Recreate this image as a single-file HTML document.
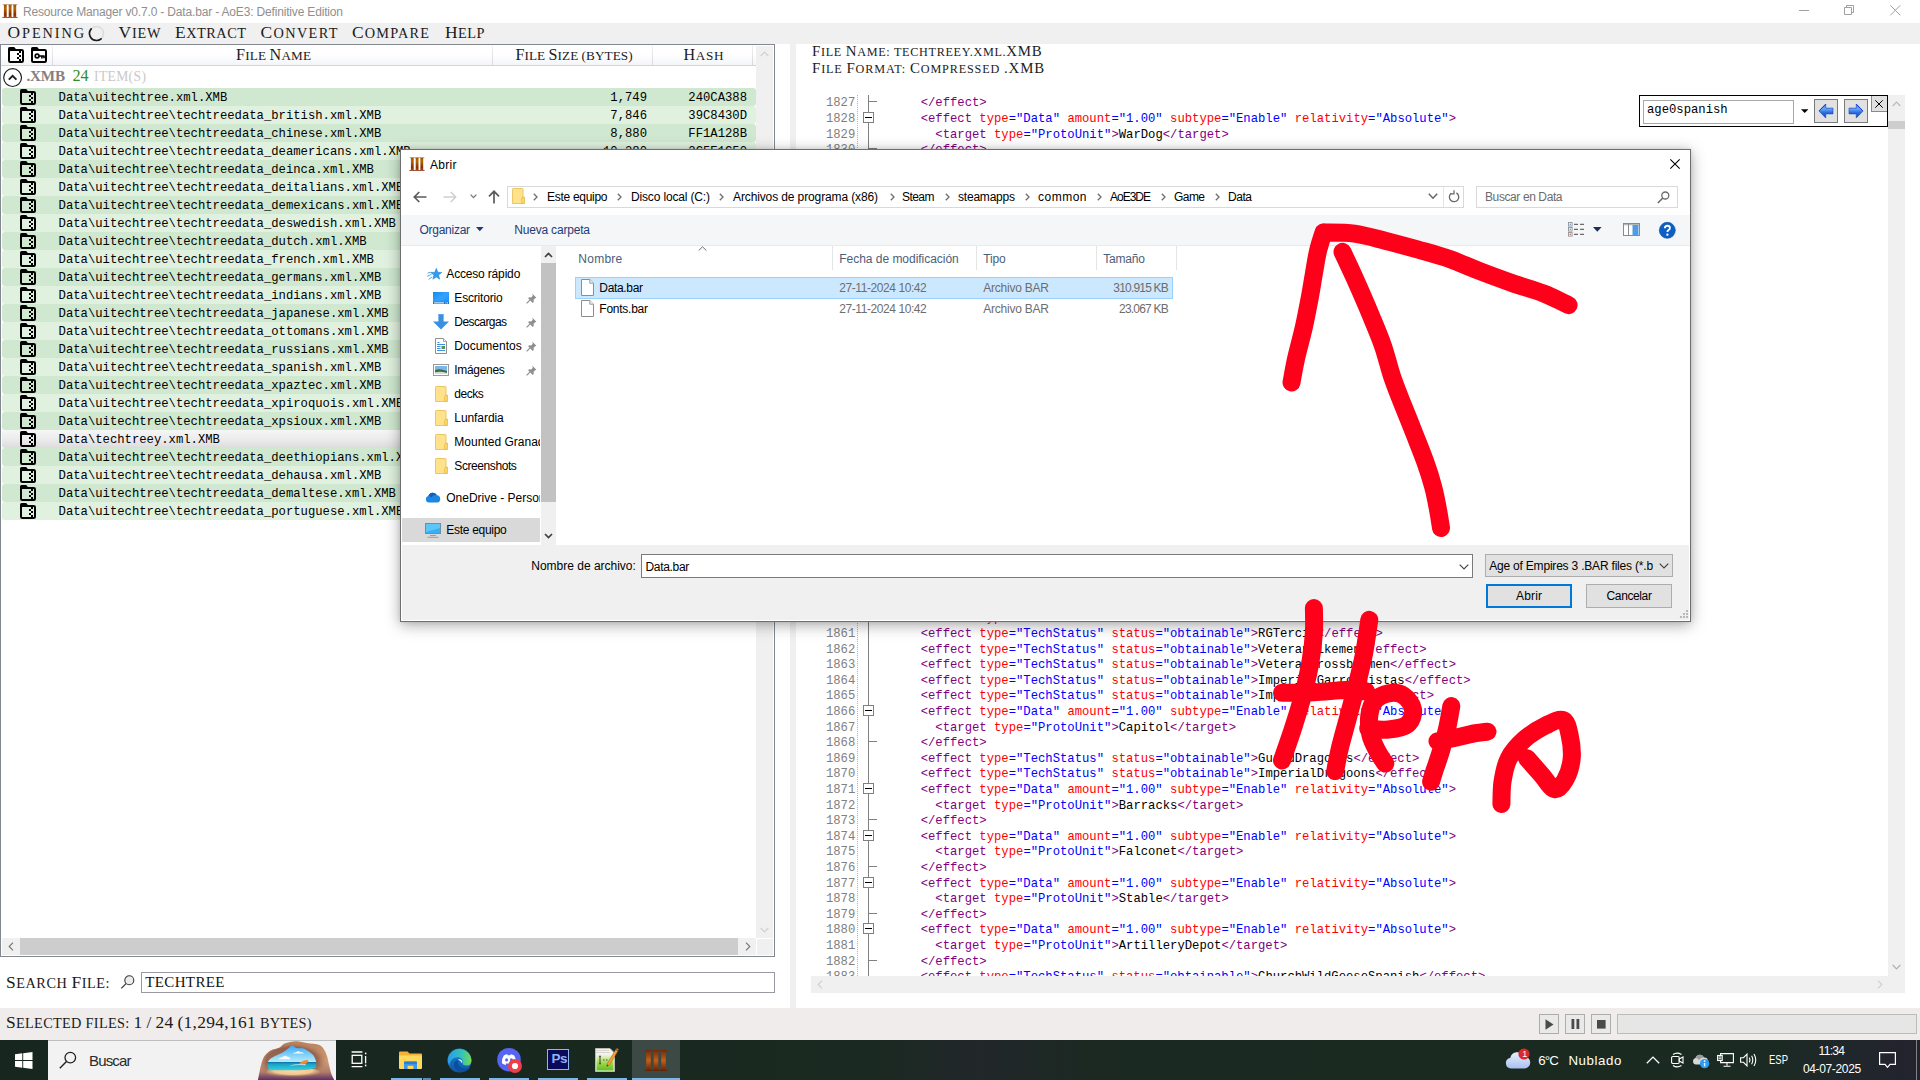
<!DOCTYPE html>
<html lang="es">
<head>
<meta charset="utf-8">
<title>Resource Manager v0.7.0 - Data.bar - AoE3: Definitive Edition</title>
<style>
html,body{margin:0;padding:0;width:1920px;height:1080px;overflow:hidden;background:#fff}
body{position:relative;font-family:"Liberation Sans",sans-serif;color:#000;font-size:12px}
.a{position:absolute}
svg{display:block;overflow:visible}
/* Trajan-like small caps: uppercase serif, big initial caps in <b> */
.tj{position:absolute;font-family:"Liberation Serif",serif;text-transform:uppercase;white-space:nowrap;transform-origin:0 50%;line-height:1}
.tj b{font-weight:normal;font-size:1.22em;line-height:0}
.tj .w{display:inline-block}
.tj .w::first-letter{font-size:1.22em;line-height:0}
.mono{font-family:"Liberation Mono",monospace;white-space:pre;font-size:12.22px}
.ui{position:absolute;font-family:"Liberation Sans",sans-serif;white-space:nowrap;line-height:1}
/* ---------- main window chrome ---------- */
#titlebar{left:0;top:0;width:1920px;height:23px;background:#fff}
#title{left:23px;top:6px;font-size:12px;color:#8f8f8f;letter-spacing:-.17px}
#menubar{left:0;top:23px;width:1920px;height:21px;background:#f0f0f0}
#menubar .tj{top:1px;font-size:14.3px;color:#1a1a1a;line-height:19px}
/* ---------- left panel ---------- */
#leftpanel{left:0;top:44px;width:775px;height:913px;box-sizing:border-box;border:1px solid #828790;background:#fff}
#lhead{left:0;top:0;width:755px;height:20px;background:linear-gradient(#fff 0%,#fff 45%,#f3f5f9 100%);border-bottom:1px solid #d5d5d5}
#lhead .sep{position:absolute;top:0;width:1px;height:20px;background:linear-gradient(#f2f2f2,#d8d8d8)}
#lhead .tj{font-size:13.2px;top:1.5px;line-height:17px;color:#1c1c1c}
.row{position:absolute;left:1px;width:754px;height:18px;border-radius:3px}
.row.d{background:#cfe8cf}
.row.l{background:#e0f1df}
.row.s{background:linear-gradient(#f6f6f6,#ececec 50%,#dcdcdc)}
.row svg{position:absolute;left:18px;top:1px}
.row span{position:absolute;top:1px;line-height:18px}
.row .n{left:56.6px}
.row .z{right:109px}
.row .h{right:9px}
#lvs{left:755px;top:1px;width:17px;height:892px;background:#f0f0f0}
#lhs{left:1px;top:893px;width:754px;height:17px;background:#f0f0f0}
#lhs .th{position:absolute;left:18px;top:0;width:718px;height:17px;background:#cdcdcd}
#lcorner{left:756px;top:894px;width:16px;height:16px;background:#f0f0f0}
#splitter{left:790px;top:44px;width:7px;height:964px;background:#f0f0f0}
#searchlbl{left:7px;top:972px;font-size:14.3px;line-height:21px;color:#1a1a1a}
#searchbox{left:141px;top:972px;width:634px;height:21px;box-sizing:border-box;border:1px solid #9a9aa4;background:#fff}

/* ---------- right panel ---------- */
#rightpanel{left:796px;top:44px;width:1124px;height:964px;background:#fff}
#rightpanel>.tj{font-size:12.2px;line-height:17px;color:#1c1c1c}
#editor{left:15px;top:51px;width:1077px;height:881px;overflow:hidden;background:#fff}
.ln{position:absolute;left:0;height:16px;line-height:16px;font-family:"Liberation Mono",monospace;font-size:12.22px;white-space:pre}
.ln .no{position:absolute;left:0;width:44.3px;text-align:right;color:#808080}
.ln .cd{position:absolute;left:65.7px}
.ln i{font-style:normal}
.ln .t{color:#800080}.ln .r{color:#ff0000}.ln .b{color:#0000ff}
.fb{position:absolute;left:52px;width:11px;height:11px;box-sizing:border-box;border:1px solid #808080;background:#fff}
.fb:after{content:"";position:absolute;left:1px;top:4px;width:7px;height:1px;background:#000}
.ft{position:absolute;left:58px;width:8px;height:1px;background:#808080}
#find{left:843px;top:51px;width:249px;height:32px;box-sizing:border-box;border:1px solid #000;background:#fff}
.fbtn{position:absolute;top:3px;width:24px;height:24px;box-sizing:border-box;border:1px solid #7a7a7a;background:#e1e1e1}
/* ---------- dialog ---------- */
#dialog{left:400px;top:149px;width:1291px;height:473px;box-sizing:border-box;border:1px solid #6e6e6e;background:#fff;box-shadow:0 3px 14px rgba(0,0,0,.34),0 0 4px rgba(0,0,0,.10)}
#dialog .pg{left:-401px;top:-150px;width:0;height:0}
#dialog .ui{font-size:12px;line-height:12px;color:#000}
#dialog .vs{position:absolute;top:246px;width:1px;height:24px;background:#e5e5e5}
/* ---------- status + taskbar ---------- */
#statusbar{left:0;top:1008px;width:1920px;height:32px;background:#f0eceb}
#statusbar .tj{left:6px;top:5px;font-size:14.3px;line-height:21px;color:#1a1a1a}
.mbtn{position:absolute;top:6px;width:20px;height:20px;box-sizing:border-box;border:1px solid #adadad;background:#e9e9e9}
#taskbar{left:0;top:1040px;width:1920px;height:40px;background:linear-gradient(90deg,#17261e 0%,#192920 40%,#1b2922 46%,#22272a 51%,#1b2922 57%,#1a2a20 75%,#1b2a22 92%,#20262c 97%,#23232e 100%)}
#taskbar .ul{position:absolute;top:38px;height:2px;background:#76b9ed}
#taskbar .ui{color:#fff}
</style>
</head>
<body>
<!-- ===== main window title bar ===== -->
<div id="titlebar" class="a">
  <div class="a" style="left:2px;top:4px"><svg width="16" height="14" viewBox="0 0 16 14"><defs><linearGradient id="ap2" x1="0" y1="0" x2="0" y2="1"><stop offset="0" stop-color="#9c5206"/><stop offset=".28" stop-color="#b96400"/><stop offset=".8" stop-color="#862c00"/><stop offset="1" stop-color="#b04a1c"/></linearGradient></defs><rect x=".6" y=".1" width="14.800" height=".7" fill="#9c6a55" opacity=".7"/><rect x=".4" y="13" width="15.200" height="1" fill="#96452c" opacity=".9"/><g fill="url(#ap2)"><path d="M1.600.800h3.400L4.700 2v10.200l.4 1H1.500l.4-1V2z"/><path d="M6.400.800h3.400L9.500 2v10.200l.4 1H6.300l.4-1V2z"/><path d="M11.100.800h3.400L14.200 2v10.200l.4 1h-3.600l.4-1V2z"/></g></svg></div>
  <div id="title" class="ui">Resource Manager v0.7.0 - Data.bar - AoE3: Definitive Edition</div>
  <!-- caption buttons (inactive, gray) -->
  <svg class="a" style="left:1799px;top:5px" width="11" height="11" viewBox="0 0 11 11"><path d="M0 5.5h10" stroke="#a0a0a0" stroke-width="1" fill="none"/></svg>
  <svg class="a" style="left:1844px;top:5px" width="11" height="11" viewBox="0 0 11 11"><path d="M.5 2.5h7v7h-7zM2.5 2.5v-2h7v7h-2" stroke="#a0a0a0" stroke-width="1" fill="none"/></svg>
  <svg class="a" style="left:1890px;top:5px" width="11" height="11" viewBox="0 0 11 11"><path d="M.3.3l10 10M10.3.3l-10 10" stroke="#a0a0a0" stroke-width="1" fill="none"/></svg>
</div>
<!-- ===== menu bar ===== -->
<div id="menubar" class="a">
  <span class="tj" style="left:7.5px;letter-spacing:1.91px;"><span class="w">Opening</span></span>
  <svg class="a" style="left:88px;top:2px" width="17" height="17" viewBox="0 0 17 17"><circle cx="8.5" cy="8.5" r="7" fill="none" stroke="#dcdcdc" stroke-width="1.6"/><path d="M3.2 3.9A7 7 0 0 0 8.5 15.5a7 7 0 0 0 4.6-1.7" fill="none" stroke="#1c1c1c" stroke-width="1.7" stroke-linecap="round"/></svg>
  <span class="tj" style="left:118.5px;letter-spacing:0.80px;"><span class="w">View</span></span>
  <span class="tj" style="left:175px;letter-spacing:0.52px;"><span class="w">Extract</span></span>
  <span class="tj" style="left:260.5px;letter-spacing:1.37px;"><span class="w">Convert</span></span>
  <span class="tj" style="left:352px;letter-spacing:1.18px;"><span class="w">Compare</span></span>
  <span class="tj" style="left:445px;letter-spacing:0.49px;"><span class="w">Help</span></span>
</div>
<!-- ===== left panel: file list ===== -->
<div id="leftpanel" class="a">
  <div id="lhead" class="a">
    <div class="a" style="left:7px;top:2px"><svg width="16" height="16" viewBox="0 0 16 16"><path d="M0 4V1.6Q0 0 1.6 0H6.2L8.3 2.4V4z" fill="#000"/><rect x="1" y="3" width="14" height="12" rx="1.3" fill="none" stroke="#000" stroke-width="2"/><path d="M11 4h2v2h-2zM9 6h2v2H9zM11 8h2v2h-2zM9 10h2v2H9zM11 12h2v2h-2z" fill="#000"/></svg></div>
    <div class="a" style="left:30px;top:2px"><svg width="16" height="16" viewBox="0 0 16 16"><path d="M0 4V1.6Q0 0 1.6 0H6.2L8.3 2.4V4z" fill="#000"/><rect x="1" y="3" width="14" height="12" rx="1.3" fill="none" stroke="#000" stroke-width="2"/><circle cx="6.1" cy="9" r="1.9" fill="none" stroke="#000" stroke-width="1.6"/><path d="M8 9H13.6M10.9 9v2.6M13 9v2.2" fill="none" stroke="#000" stroke-width="1.6"/></svg></div>
    <div class="sep" style="left:51px"></div><div class="sep" style="left:491px"></div><div class="sep" style="left:651px"></div><div class="sep" style="left:751px"></div>
    <span class="tj" style="left:235px;letter-spacing:0.16px;"><span class="w">File</span> <span class="w">Name</span></span>
    <span class="tj" style="left:514.5px;letter-spacing:0.06px;"><span class="w">File</span> <span class="w">Size</span> (bytes)</span>
    <span class="tj" style="left:682.5px;letter-spacing:0.66px;"><span class="w">Hash</span></span>
  </div>
  <!-- group header -->
  <svg class="a" style="left:2px;top:23px" width="20" height="20" viewBox="0 0 20 20"><circle cx="9.6" cy="9.6" r="8.9" fill="#fff" stroke="#1e1e1e" stroke-width="1.2"/><path d="M5.8 11.6L9.6 7.9l3.8 3.7" fill="none" stroke="#1e1e1e" stroke-width="1.9"/></svg>
  <span class="tj" style="left:25.5px;top:21px;font-size:15.2px;line-height:20px;font-weight:bold;color:#86807f;letter-spacing:-.2px">.XMB</span>
  <span class="tj" style="left:71.5px;top:21px;font-size:16.2px;line-height:20px;color:#2e8b2e">24</span>
  <span class="tj" style="left:93px;top:21.5px;font-size:13.6px;line-height:20px;color:#cdc7c7;letter-spacing:.35px">item(s)</span>
  <div class="row d" style="top:43px"><svg width="16" height="16" viewBox="0 0 16 16"><path d="M0 4V1.6Q0 0 1.6 0H6.2L8.3 2.4V4z" fill="#000"/><rect x="1" y="3" width="14" height="12" rx="1.3" fill="none" stroke="#000" stroke-width="2"/><path d="M11 4h2v2h-2zM9 6h2v2H9zM11 8h2v2h-2zM9 10h2v2H9zM11 12h2v2h-2z" fill="#000"/></svg><span class="n mono">Data\uitechtree.xml.XMB</span><span class="z mono">1,749</span><span class="h mono">240CA388</span></div>
<div class="row l" style="top:61px"><svg width="16" height="16" viewBox="0 0 16 16"><path d="M0 4V1.6Q0 0 1.6 0H6.2L8.3 2.4V4z" fill="#000"/><rect x="1" y="3" width="14" height="12" rx="1.3" fill="none" stroke="#000" stroke-width="2"/><path d="M11 4h2v2h-2zM9 6h2v2H9zM11 8h2v2h-2zM9 10h2v2H9zM11 12h2v2h-2z" fill="#000"/></svg><span class="n mono">Data\uitechtree\techtreedata_british.xml.XMB</span><span class="z mono">7,846</span><span class="h mono">39C8430D</span></div>
<div class="row d" style="top:79px"><svg width="16" height="16" viewBox="0 0 16 16"><path d="M0 4V1.6Q0 0 1.6 0H6.2L8.3 2.4V4z" fill="#000"/><rect x="1" y="3" width="14" height="12" rx="1.3" fill="none" stroke="#000" stroke-width="2"/><path d="M11 4h2v2h-2zM9 6h2v2H9zM11 8h2v2h-2zM9 10h2v2H9zM11 12h2v2h-2z" fill="#000"/></svg><span class="n mono">Data\uitechtree\techtreedata_chinese.xml.XMB</span><span class="z mono">8,880</span><span class="h mono">FF1A128B</span></div>
<div class="row l" style="top:97px"><svg width="16" height="16" viewBox="0 0 16 16"><path d="M0 4V1.6Q0 0 1.6 0H6.2L8.3 2.4V4z" fill="#000"/><rect x="1" y="3" width="14" height="12" rx="1.3" fill="none" stroke="#000" stroke-width="2"/><path d="M11 4h2v2h-2zM9 6h2v2H9zM11 8h2v2h-2zM9 10h2v2H9zM11 12h2v2h-2z" fill="#000"/></svg><span class="n mono">Data\uitechtree\techtreedata_deamericans.xml.XMB</span><span class="z mono">10,280</span><span class="h mono">2C5E1C50</span></div>
<div class="row d" style="top:115px"><svg width="16" height="16" viewBox="0 0 16 16"><path d="M0 4V1.6Q0 0 1.6 0H6.2L8.3 2.4V4z" fill="#000"/><rect x="1" y="3" width="14" height="12" rx="1.3" fill="none" stroke="#000" stroke-width="2"/><path d="M11 4h2v2h-2zM9 6h2v2H9zM11 8h2v2h-2zM9 10h2v2H9zM11 12h2v2h-2z" fill="#000"/></svg><span class="n mono">Data\uitechtree\techtreedata_deinca.xml.XMB</span></div>
<div class="row l" style="top:133px"><svg width="16" height="16" viewBox="0 0 16 16"><path d="M0 4V1.6Q0 0 1.6 0H6.2L8.3 2.4V4z" fill="#000"/><rect x="1" y="3" width="14" height="12" rx="1.3" fill="none" stroke="#000" stroke-width="2"/><path d="M11 4h2v2h-2zM9 6h2v2H9zM11 8h2v2h-2zM9 10h2v2H9zM11 12h2v2h-2z" fill="#000"/></svg><span class="n mono">Data\uitechtree\techtreedata_deitalians.xml.XMB</span></div>
<div class="row d" style="top:151px"><svg width="16" height="16" viewBox="0 0 16 16"><path d="M0 4V1.6Q0 0 1.6 0H6.2L8.3 2.4V4z" fill="#000"/><rect x="1" y="3" width="14" height="12" rx="1.3" fill="none" stroke="#000" stroke-width="2"/><path d="M11 4h2v2h-2zM9 6h2v2H9zM11 8h2v2h-2zM9 10h2v2H9zM11 12h2v2h-2z" fill="#000"/></svg><span class="n mono">Data\uitechtree\techtreedata_demexicans.xml.XMB</span></div>
<div class="row l" style="top:169px"><svg width="16" height="16" viewBox="0 0 16 16"><path d="M0 4V1.6Q0 0 1.6 0H6.2L8.3 2.4V4z" fill="#000"/><rect x="1" y="3" width="14" height="12" rx="1.3" fill="none" stroke="#000" stroke-width="2"/><path d="M11 4h2v2h-2zM9 6h2v2H9zM11 8h2v2h-2zM9 10h2v2H9zM11 12h2v2h-2z" fill="#000"/></svg><span class="n mono">Data\uitechtree\techtreedata_deswedish.xml.XMB</span></div>
<div class="row d" style="top:187px"><svg width="16" height="16" viewBox="0 0 16 16"><path d="M0 4V1.6Q0 0 1.6 0H6.2L8.3 2.4V4z" fill="#000"/><rect x="1" y="3" width="14" height="12" rx="1.3" fill="none" stroke="#000" stroke-width="2"/><path d="M11 4h2v2h-2zM9 6h2v2H9zM11 8h2v2h-2zM9 10h2v2H9zM11 12h2v2h-2z" fill="#000"/></svg><span class="n mono">Data\uitechtree\techtreedata_dutch.xml.XMB</span></div>
<div class="row l" style="top:205px"><svg width="16" height="16" viewBox="0 0 16 16"><path d="M0 4V1.6Q0 0 1.6 0H6.2L8.3 2.4V4z" fill="#000"/><rect x="1" y="3" width="14" height="12" rx="1.3" fill="none" stroke="#000" stroke-width="2"/><path d="M11 4h2v2h-2zM9 6h2v2H9zM11 8h2v2h-2zM9 10h2v2H9zM11 12h2v2h-2z" fill="#000"/></svg><span class="n mono">Data\uitechtree\techtreedata_french.xml.XMB</span></div>
<div class="row d" style="top:223px"><svg width="16" height="16" viewBox="0 0 16 16"><path d="M0 4V1.6Q0 0 1.6 0H6.2L8.3 2.4V4z" fill="#000"/><rect x="1" y="3" width="14" height="12" rx="1.3" fill="none" stroke="#000" stroke-width="2"/><path d="M11 4h2v2h-2zM9 6h2v2H9zM11 8h2v2h-2zM9 10h2v2H9zM11 12h2v2h-2z" fill="#000"/></svg><span class="n mono">Data\uitechtree\techtreedata_germans.xml.XMB</span></div>
<div class="row l" style="top:241px"><svg width="16" height="16" viewBox="0 0 16 16"><path d="M0 4V1.6Q0 0 1.6 0H6.2L8.3 2.4V4z" fill="#000"/><rect x="1" y="3" width="14" height="12" rx="1.3" fill="none" stroke="#000" stroke-width="2"/><path d="M11 4h2v2h-2zM9 6h2v2H9zM11 8h2v2h-2zM9 10h2v2H9zM11 12h2v2h-2z" fill="#000"/></svg><span class="n mono">Data\uitechtree\techtreedata_indians.xml.XMB</span></div>
<div class="row d" style="top:259px"><svg width="16" height="16" viewBox="0 0 16 16"><path d="M0 4V1.6Q0 0 1.6 0H6.2L8.3 2.4V4z" fill="#000"/><rect x="1" y="3" width="14" height="12" rx="1.3" fill="none" stroke="#000" stroke-width="2"/><path d="M11 4h2v2h-2zM9 6h2v2H9zM11 8h2v2h-2zM9 10h2v2H9zM11 12h2v2h-2z" fill="#000"/></svg><span class="n mono">Data\uitechtree\techtreedata_japanese.xml.XMB</span></div>
<div class="row l" style="top:277px"><svg width="16" height="16" viewBox="0 0 16 16"><path d="M0 4V1.6Q0 0 1.6 0H6.2L8.3 2.4V4z" fill="#000"/><rect x="1" y="3" width="14" height="12" rx="1.3" fill="none" stroke="#000" stroke-width="2"/><path d="M11 4h2v2h-2zM9 6h2v2H9zM11 8h2v2h-2zM9 10h2v2H9zM11 12h2v2h-2z" fill="#000"/></svg><span class="n mono">Data\uitechtree\techtreedata_ottomans.xml.XMB</span></div>
<div class="row d" style="top:295px"><svg width="16" height="16" viewBox="0 0 16 16"><path d="M0 4V1.6Q0 0 1.6 0H6.2L8.3 2.4V4z" fill="#000"/><rect x="1" y="3" width="14" height="12" rx="1.3" fill="none" stroke="#000" stroke-width="2"/><path d="M11 4h2v2h-2zM9 6h2v2H9zM11 8h2v2h-2zM9 10h2v2H9zM11 12h2v2h-2z" fill="#000"/></svg><span class="n mono">Data\uitechtree\techtreedata_russians.xml.XMB</span></div>
<div class="row l" style="top:313px"><svg width="16" height="16" viewBox="0 0 16 16"><path d="M0 4V1.6Q0 0 1.6 0H6.2L8.3 2.4V4z" fill="#000"/><rect x="1" y="3" width="14" height="12" rx="1.3" fill="none" stroke="#000" stroke-width="2"/><path d="M11 4h2v2h-2zM9 6h2v2H9zM11 8h2v2h-2zM9 10h2v2H9zM11 12h2v2h-2z" fill="#000"/></svg><span class="n mono">Data\uitechtree\techtreedata_spanish.xml.XMB</span></div>
<div class="row d" style="top:331px"><svg width="16" height="16" viewBox="0 0 16 16"><path d="M0 4V1.6Q0 0 1.6 0H6.2L8.3 2.4V4z" fill="#000"/><rect x="1" y="3" width="14" height="12" rx="1.3" fill="none" stroke="#000" stroke-width="2"/><path d="M11 4h2v2h-2zM9 6h2v2H9zM11 8h2v2h-2zM9 10h2v2H9zM11 12h2v2h-2z" fill="#000"/></svg><span class="n mono">Data\uitechtree\techtreedata_xpaztec.xml.XMB</span></div>
<div class="row l" style="top:349px"><svg width="16" height="16" viewBox="0 0 16 16"><path d="M0 4V1.6Q0 0 1.6 0H6.2L8.3 2.4V4z" fill="#000"/><rect x="1" y="3" width="14" height="12" rx="1.3" fill="none" stroke="#000" stroke-width="2"/><path d="M11 4h2v2h-2zM9 6h2v2H9zM11 8h2v2h-2zM9 10h2v2H9zM11 12h2v2h-2z" fill="#000"/></svg><span class="n mono">Data\uitechtree\techtreedata_xpiroquois.xml.XMB</span></div>
<div class="row d" style="top:367px"><svg width="16" height="16" viewBox="0 0 16 16"><path d="M0 4V1.6Q0 0 1.6 0H6.2L8.3 2.4V4z" fill="#000"/><rect x="1" y="3" width="14" height="12" rx="1.3" fill="none" stroke="#000" stroke-width="2"/><path d="M11 4h2v2h-2zM9 6h2v2H9zM11 8h2v2h-2zM9 10h2v2H9zM11 12h2v2h-2z" fill="#000"/></svg><span class="n mono">Data\uitechtree\techtreedata_xpsioux.xml.XMB</span></div>
<div class="row s" style="top:385px"><svg width="16" height="16" viewBox="0 0 16 16"><path d="M0 4V1.6Q0 0 1.6 0H6.2L8.3 2.4V4z" fill="#000"/><rect x="1" y="3" width="14" height="12" rx="1.3" fill="none" stroke="#000" stroke-width="2"/><path d="M11 4h2v2h-2zM9 6h2v2H9zM11 8h2v2h-2zM9 10h2v2H9zM11 12h2v2h-2z" fill="#000"/></svg><span class="n mono">Data\techtreey.xml.XMB</span></div>
<div class="row d" style="top:403px"><svg width="16" height="16" viewBox="0 0 16 16"><path d="M0 4V1.6Q0 0 1.6 0H6.2L8.3 2.4V4z" fill="#000"/><rect x="1" y="3" width="14" height="12" rx="1.3" fill="none" stroke="#000" stroke-width="2"/><path d="M11 4h2v2h-2zM9 6h2v2H9zM11 8h2v2h-2zM9 10h2v2H9zM11 12h2v2h-2z" fill="#000"/></svg><span class="n mono">Data\uitechtree\techtreedata_deethiopians.xml.XMB</span></div>
<div class="row l" style="top:421px"><svg width="16" height="16" viewBox="0 0 16 16"><path d="M0 4V1.6Q0 0 1.6 0H6.2L8.3 2.4V4z" fill="#000"/><rect x="1" y="3" width="14" height="12" rx="1.3" fill="none" stroke="#000" stroke-width="2"/><path d="M11 4h2v2h-2zM9 6h2v2H9zM11 8h2v2h-2zM9 10h2v2H9zM11 12h2v2h-2z" fill="#000"/></svg><span class="n mono">Data\uitechtree\techtreedata_dehausa.xml.XMB</span></div>
<div class="row d" style="top:439px"><svg width="16" height="16" viewBox="0 0 16 16"><path d="M0 4V1.6Q0 0 1.6 0H6.2L8.3 2.4V4z" fill="#000"/><rect x="1" y="3" width="14" height="12" rx="1.3" fill="none" stroke="#000" stroke-width="2"/><path d="M11 4h2v2h-2zM9 6h2v2H9zM11 8h2v2h-2zM9 10h2v2H9zM11 12h2v2h-2z" fill="#000"/></svg><span class="n mono">Data\uitechtree\techtreedata_demaltese.xml.XMB</span></div>
<div class="row l" style="top:457px"><svg width="16" height="16" viewBox="0 0 16 16"><path d="M0 4V1.6Q0 0 1.6 0H6.2L8.3 2.4V4z" fill="#000"/><rect x="1" y="3" width="14" height="12" rx="1.3" fill="none" stroke="#000" stroke-width="2"/><path d="M11 4h2v2h-2zM9 6h2v2H9zM11 8h2v2h-2zM9 10h2v2H9zM11 12h2v2h-2z" fill="#000"/></svg><span class="n mono">Data\uitechtree\techtreedata_portuguese.xml.XMB</span></div>
  <!-- scrollbars -->
  <div id="lvs" class="a"><svg class="a" style="left:4px;top:5px" width="9" height="6" viewBox="0 0 9 6"><path d="M.7 5L4.5 1.2 8.3 5" fill="none" stroke="#d0d0d0" stroke-width="1.2"/></svg>
    <svg class="a" style="left:4px;top:881px" width="9" height="6" viewBox="0 0 9 6"><path d="M.7 1L4.5 4.8 8.3 1" fill="none" stroke="#d0d0d0" stroke-width="1.2"/></svg></div>
  <div id="lhs" class="a"><div class="th"></div>
    <svg class="a" style="left:6px;top:4px" width="6" height="9" viewBox="0 0 6 9"><path d="M5 .7L1.2 4.5 5 8.3" fill="none" stroke="#7a7a7a" stroke-width="1.2"/></svg>
    <svg class="a" style="left:743px;top:4px" width="6" height="9" viewBox="0 0 6 9"><path d="M1 .7L4.8 4.5 1 8.3" fill="none" stroke="#7a7a7a" stroke-width="1.2"/></svg></div>
  <div id="lcorner" class="a"></div>
</div>
<div id="splitter" class="a"></div>
<span class="tj" style="left:6px;letter-spacing:0.53px;top:973px;font-size:14.3px;line-height:21px;color:#1a1a1a"><span class="w">Search</span> <span class="w">File:</span></span>
<svg class="a" style="left:119px;top:974px" width="17" height="17" viewBox="0 0 17 17"><path d="M7.300 9.400L2.300 14.400" stroke="#3a3a3a" stroke-width="1.300" fill="none"/><circle cx="10.300" cy="6.300" r="4.500" fill="#ececec" stroke="#3a3a3a" stroke-width="1.100"/></svg>
<div id="searchbox" class="a"><span class="tj" style="left:3.200px;letter-spacing:0.38px;top:0;font-size:15px;line-height:19px;color:#111">techtree</span></div>
<!-- ===== right panel: preview ===== -->
<div id="rightpanel" class="a">
  <span class="tj" style="left:16px;letter-spacing:0.69px;top:0px"><span class="w">File</span> <span class="w">Name:</span> techtreey.xml.<b>XMB</b></span>
  <span class="tj" style="left:16px;letter-spacing:0.84px;top:17px"><span class="w">File</span> <span class="w">Format:</span> <span class="w">Compressed</span> <b>.XMB</b></span>
  <div id="editor" class="a">
    <div class="a" style="left:46px;top:0;width:1px;height:881px;background:repeating-linear-gradient(#b4b4b4 0 1px,#fff 1px 2px)"></div>
    <div class="a" style="left:57px;top:0;width:1px;height:881px;background:#808080"></div>
    <div class="ln" style="top:0px"><span class="no">1827</span><span class="cd">      <i class="t">&lt;/effect&gt;</i></span></div>
<div class="ft" style="top:6px"></div>
<div class="ln" style="top:16px"><span class="no">1828</span><span class="cd">      <i class="t">&lt;effect</i> <i class="r">type</i><i class="b">="Data"</i> <i class="r">amount</i><i class="b">="1.00"</i> <i class="r">subtype</i><i class="b">="Enable"</i> <i class="r">relativity</i><i class="b">="Absolute"</i><i class="t">&gt;</i></span></div>
<div class="fb" style="top:17px"></div>
<div class="ln" style="top:32px"><span class="no">1829</span><span class="cd">        <i class="t">&lt;target</i> <i class="r">type</i><i class="b">="ProtoUnit"</i><i class="t">&gt;</i>WarDog<i class="t">&lt;/target&gt;</i></span></div>
<div class="ln" style="top:47px"><span class="no">1830</span><span class="cd">      <i class="t">&lt;/effect&gt;</i></span></div>
<div class="ft" style="top:53px"></div>
<div class="ln" style="top:515px"><span class="no">1860</span><span class="cd">      <i class="t">&lt;effect</i> <i class="r">type</i><i class="b">="TechStatus"</i> <i class="r">status</i><i class="b">="obtainable"</i><i class="t">&gt;</i>GuardLancers<i class="t">&lt;/effect&gt;</i></span></div>
<div class="ln" style="top:531px"><span class="no">1861</span><span class="cd">      <i class="t">&lt;effect</i> <i class="r">type</i><i class="b">="TechStatus"</i> <i class="r">status</i><i class="b">="obtainable"</i><i class="t">&gt;</i>RGTercio<i class="t">&lt;/effect&gt;</i></span></div>
<div class="ln" style="top:547px"><span class="no">1862</span><span class="cd">      <i class="t">&lt;effect</i> <i class="r">type</i><i class="b">="TechStatus"</i> <i class="r">status</i><i class="b">="obtainable"</i><i class="t">&gt;</i>VeteranPikemen<i class="t">&lt;/effect&gt;</i></span></div>
<div class="ln" style="top:562px"><span class="no">1863</span><span class="cd">      <i class="t">&lt;effect</i> <i class="r">type</i><i class="b">="TechStatus"</i> <i class="r">status</i><i class="b">="obtainable"</i><i class="t">&gt;</i>VeteranCrossbowmen<i class="t">&lt;/effect&gt;</i></span></div>
<div class="ln" style="top:578px"><span class="no">1864</span><span class="cd">      <i class="t">&lt;effect</i> <i class="r">type</i><i class="b">="TechStatus"</i> <i class="r">status</i><i class="b">="obtainable"</i><i class="t">&gt;</i>ImperialGarrochistas<i class="t">&lt;/effect&gt;</i></span></div>
<div class="ln" style="top:593px"><span class="no">1865</span><span class="cd">      <i class="t">&lt;effect</i> <i class="r">type</i><i class="b">="TechStatus"</i> <i class="r">status</i><i class="b">="obtainable"</i><i class="t">&gt;</i>ImperialLancers<i class="t">&lt;/effect&gt;</i></span></div>
<div class="ln" style="top:609px"><span class="no">1866</span><span class="cd">      <i class="t">&lt;effect</i> <i class="r">type</i><i class="b">="Data"</i> <i class="r">amount</i><i class="b">="1.00"</i> <i class="r">subtype</i><i class="b">="Enable"</i> <i class="r">relativity</i><i class="b">="Absolute"</i><i class="t">&gt;</i></span></div>
<div class="fb" style="top:610px"></div>
<div class="ln" style="top:625px"><span class="no">1867</span><span class="cd">        <i class="t">&lt;target</i> <i class="r">type</i><i class="b">="ProtoUnit"</i><i class="t">&gt;</i>Capitol<i class="t">&lt;/target&gt;</i></span></div>
<div class="ln" style="top:640px"><span class="no">1868</span><span class="cd">      <i class="t">&lt;/effect&gt;</i></span></div>
<div class="ft" style="top:646px"></div>
<div class="ln" style="top:656px"><span class="no">1869</span><span class="cd">      <i class="t">&lt;effect</i> <i class="r">type</i><i class="b">="TechStatus"</i> <i class="r">status</i><i class="b">="obtainable"</i><i class="t">&gt;</i>GuardDragoons<i class="t">&lt;/effect&gt;</i></span></div>
<div class="ln" style="top:671px"><span class="no">1870</span><span class="cd">      <i class="t">&lt;effect</i> <i class="r">type</i><i class="b">="TechStatus"</i> <i class="r">status</i><i class="b">="obtainable"</i><i class="t">&gt;</i>ImperialDragoons<i class="t">&lt;/effect&gt;</i></span></div>
<div class="ln" style="top:687px"><span class="no">1871</span><span class="cd">      <i class="t">&lt;effect</i> <i class="r">type</i><i class="b">="Data"</i> <i class="r">amount</i><i class="b">="1.00"</i> <i class="r">subtype</i><i class="b">="Enable"</i> <i class="r">relativity</i><i class="b">="Absolute"</i><i class="t">&gt;</i></span></div>
<div class="fb" style="top:688px"></div>
<div class="ln" style="top:703px"><span class="no">1872</span><span class="cd">        <i class="t">&lt;target</i> <i class="r">type</i><i class="b">="ProtoUnit"</i><i class="t">&gt;</i>Barracks<i class="t">&lt;/target&gt;</i></span></div>
<div class="ln" style="top:718px"><span class="no">1873</span><span class="cd">      <i class="t">&lt;/effect&gt;</i></span></div>
<div class="ft" style="top:724px"></div>
<div class="ln" style="top:734px"><span class="no">1874</span><span class="cd">      <i class="t">&lt;effect</i> <i class="r">type</i><i class="b">="Data"</i> <i class="r">amount</i><i class="b">="1.00"</i> <i class="r">subtype</i><i class="b">="Enable"</i> <i class="r">relativity</i><i class="b">="Absolute"</i><i class="t">&gt;</i></span></div>
<div class="fb" style="top:735px"></div>
<div class="ln" style="top:749px"><span class="no">1875</span><span class="cd">        <i class="t">&lt;target</i> <i class="r">type</i><i class="b">="ProtoUnit"</i><i class="t">&gt;</i>Falconet<i class="t">&lt;/target&gt;</i></span></div>
<div class="ln" style="top:765px"><span class="no">1876</span><span class="cd">      <i class="t">&lt;/effect&gt;</i></span></div>
<div class="ft" style="top:771px"></div>
<div class="ln" style="top:781px"><span class="no">1877</span><span class="cd">      <i class="t">&lt;effect</i> <i class="r">type</i><i class="b">="Data"</i> <i class="r">amount</i><i class="b">="1.00"</i> <i class="r">subtype</i><i class="b">="Enable"</i> <i class="r">relativity</i><i class="b">="Absolute"</i><i class="t">&gt;</i></span></div>
<div class="fb" style="top:782px"></div>
<div class="ln" style="top:796px"><span class="no">1878</span><span class="cd">        <i class="t">&lt;target</i> <i class="r">type</i><i class="b">="ProtoUnit"</i><i class="t">&gt;</i>Stable<i class="t">&lt;/target&gt;</i></span></div>
<div class="ln" style="top:812px"><span class="no">1879</span><span class="cd">      <i class="t">&lt;/effect&gt;</i></span></div>
<div class="ft" style="top:818px"></div>
<div class="ln" style="top:827px"><span class="no">1880</span><span class="cd">      <i class="t">&lt;effect</i> <i class="r">type</i><i class="b">="Data"</i> <i class="r">amount</i><i class="b">="1.00"</i> <i class="r">subtype</i><i class="b">="Enable"</i> <i class="r">relativity</i><i class="b">="Absolute"</i><i class="t">&gt;</i></span></div>
<div class="fb" style="top:828px"></div>
<div class="ln" style="top:843px"><span class="no">1881</span><span class="cd">        <i class="t">&lt;target</i> <i class="r">type</i><i class="b">="ProtoUnit"</i><i class="t">&gt;</i>ArtilleryDepot<i class="t">&lt;/target&gt;</i></span></div>
<div class="ln" style="top:859px"><span class="no">1882</span><span class="cd">      <i class="t">&lt;/effect&gt;</i></span></div>
<div class="ft" style="top:865px"></div>
<div class="ln" style="top:874px"><span class="no">1883</span><span class="cd">      <i class="t">&lt;effect</i> <i class="r">type</i><i class="b">="TechStatus"</i> <i class="r">status</i><i class="b">="obtainable"</i><i class="t">&gt;</i>ChurchWildGeeseSpanish<i class="t">&lt;/effect&gt;</i></span></div>
  </div>
  <!-- find bar -->
  <div id="find" class="a">
    <div class="a" style="left:3px;top:4px;width:151px;height:24px;box-sizing:border-box;border:1px solid #a9a9a9;background:#fff"><span class="mono a" style="left:3px;top:1px;line-height:16px">age0spanish</span></div>
    <svg class="a" style="left:161px;top:13px" width="8" height="5" viewBox="0 0 8 5"><path d="M0 .200h7.400L3.700 4z" fill="#000"/></svg>
    <div class="fbtn" style="left:174px"><svg width="22" height="22" viewBox="0 0 22 22"><defs><linearGradient id="ag" x1="0" y1="0" x2="0" y2="1"><stop offset="0" stop-color="#3f86f2"/><stop offset=".35" stop-color="#67a6fb"/><stop offset=".6" stop-color="#2f6fe0"/><stop offset="1" stop-color="#123fae"/></linearGradient></defs><path d="M3.900 11L10.750 4V8.100H18V13.900H10.750V18z" fill="url(#ag)" stroke="#1a44b8" stroke-width=".6" stroke-linejoin="round"/><path d="M4.300 10.700L10.600 4.300" stroke="#0a1fe8" stroke-width=".8"/></svg></div>
    <div class="fbtn" style="left:204px"><svg width="22" height="22" viewBox="0 0 22 22"><path d="M18.100 11L11.250 4V8.100H4V13.900H11.250V18z" fill="url(#ag)" stroke="#1a44b8" stroke-width=".6" stroke-linejoin="round"/><path d="M17.700 10.700L11.400 4.300" stroke="#0a1fe8" stroke-width=".8"/></svg></div>
    <div class="a" style="left:231px;top:0;width:16px;height:16px;box-sizing:border-box;border-left:1px solid #8a8a8a;border-bottom:1px solid #8a8a8a;background:#e1e1e1"><svg class="a" style="left:3px;top:3.500px" width="8" height="8" viewBox="0 0 8 8"><path d="M.3.300l7.400 7.400M7.700.300L.3 7.700" stroke="#000" stroke-width="1" fill="none"/></svg></div>
  </div>
  <!-- editor scrollbars -->
  <div class="a" style="left:1092px;top:51px;width:17px;height:881px;background:#f0f0f0">
    <svg class="a" style="left:4px;top:6px" width="9" height="6" viewBox="0 0 9 6"><path d="M.7 5L4.5 1.2 8.3 5" fill="none" stroke="#b9b9b9" stroke-width="1.2"/></svg>
    <div class="a" style="left:0;top:26px;width:17px;height:8px;background:#cdcdcd"></div>
    <svg class="a" style="left:4px;top:869px" width="9" height="6" viewBox="0 0 9 6"><path d="M.7 1L4.5 4.8 8.3 1" fill="none" stroke="#b0b0b0" stroke-width="1.2"/></svg>
  </div>
  <div class="a" style="left:15px;top:932px;width:1094px;height:17px;background:#f0f0f0">
    <svg class="a" style="left:6px;top:4px" width="6" height="9" viewBox="0 0 6 9"><path d="M5 .7L1.2 4.5 5 8.3" fill="none" stroke="#cfcfcf" stroke-width="1.2"/></svg>
    <svg class="a" style="left:1066px;top:4px" width="6" height="9" viewBox="0 0 6 9"><path d="M1 .7L4.8 4.5 1 8.3" fill="none" stroke="#cfcfcf" stroke-width="1.2"/></svg>
  </div>
</div>
<!-- ===== status bar ===== -->
<div id="statusbar" class="a">
  <span class="tj" style="left:6px;letter-spacing:0.31px;"><span class="w">Selected</span> files: <b>1</b> <b>/</b> <b>24</b> <b>(1,294,161</b> bytes)</span>
  <div class="mbtn" style="left:1539px"><svg class="a" style="left:5px;top:4px" width="9" height="11" viewBox="0 0 9 11"><path d="M.5.300l8 5.200-8 5.200z" fill="#4a4a4a"/></svg></div>
  <div class="mbtn" style="left:1565px"><svg class="a" style="left:5px;top:4px" width="9" height="10" viewBox="0 0 9 10"><path d="M.5 0h2.800v10H.5zM5.500 0h2.800v10H5.500z" fill="#4a4a4a"/></svg></div>
  <div class="mbtn" style="left:1591px"><svg class="a" style="left:5px;top:5px" width="9" height="9" viewBox="0 0 9 9"><rect width="8.600" height="8.600" fill="#4a4a4a"/></svg></div>
  <div class="a" style="left:1617px;top:6px;width:300px;height:20px;box-sizing:border-box;border:1px solid #bcbcbc;background:#e6e6e6"></div>
</div>
<!-- ===== taskbar ===== -->
<div id="taskbar" class="a">
  <svg class="a" style="left:15px;top:12px" width="18" height="17" viewBox="0 0 18 17"><path d="M0 2.300L7.300 1.300v6.800H0zM8.200 1.200L17.500 0v8.100H8.200zM0 8.900h7.300v6.800L0 14.700zM8.200 8.900h9.300V17l-9.300-1.200z" fill="#fff"/></svg>
  <div class="a" style="left:48px;top:0;width:288px;height:40px;box-sizing:border-box;border-top:1px solid #bdbdbd;background:#f2f2f2"></div>
  <svg class="a" style="left:59px;top:11px" width="18" height="18" viewBox="0 0 18 18"><circle cx="11.300" cy="6.600" r="5.300" fill="none" stroke="#1f1f1f" stroke-width="1.300"/><path d="M7.500 10.500L.8 17.200" stroke="#1f1f1f" stroke-width="1.400"/></svg>
  <span class="ui" style="left:89px;letter-spacing:-0.84px;top:13px;font-size:15px;line-height:15px;color:#2a2a2a">Buscar</span>
  <!-- search highlight illustration: beach seen through a cave -->
  <svg class="a" style="left:257px;top:1px" width="79" height="39" viewBox="0 0 79 39"><defs><linearGradient id="sky" x1="0" y1="0" x2="0" y2="1"><stop offset="0" stop-color="#2fa3ff"/><stop offset="1" stop-color="#b8eef8"/></linearGradient><linearGradient id="sea" x1="0" y1="0" x2="0" y2="1"><stop offset="0" stop-color="#0b6aa8"/><stop offset=".22" stop-color="#1d9fc6"/><stop offset="1" stop-color="#35d8dc"/></linearGradient><linearGradient id="rock" x1="0" y1="0" x2="0" y2="1"><stop offset="0" stop-color="#b97f5c"/><stop offset=".5" stop-color="#d3a077"/><stop offset=".8" stop-color="#b07a68"/><stop offset="1" stop-color="#5a2f6c"/></linearGradient><radialGradient id="snd" cx=".5" cy=".35" r=".6"><stop offset="0" stop-color="#fbd9a8"/><stop offset=".6" stop-color="#f3c791"/><stop offset="1" stop-color="#c99468" stop-opacity="0"/></radialGradient><radialGradient id="rsh" cx=".45" cy=".5" r=".55"><stop offset=".62" stop-color="#6b3c36" stop-opacity=".55"/><stop offset=".9" stop-color="#c99468" stop-opacity="0"/></radialGradient><clipPath id="hol"><path d="M10.1 23.2C10.3 21.7 11.4 19.7 12.8 18.3C14.2 16.9 16.6 15.9 18.7 14.8C20.8 13.7 23.2 13.0 25.2 11.8C27.2 10.7 29.0 9.1 30.6 7.9C32.2 6.7 33.6 4.8 35.1 4.7C36.6 4.5 37.6 6.4 39.5 6.9C41.4 7.4 44.6 6.9 46.5 7.4C48.4 7.9 49.3 8.8 50.9 9.8C52.5 10.9 54.7 12.4 55.9 13.8C57.1 15.2 57.7 16.8 58.3 18.3C58.9 19.8 59.2 21.3 59.3 22.7C59.4 24.1 59.5 25.9 58.8 26.7C58.1 27.5 56.8 27.3 54.9 27.7C53.0 28.1 54.4 28.6 47.5 28.9C40.6 29.1 19.8 29.5 13.8 29.2C7.8 28.9 11.9 28.2 11.3 27.2C10.7 26.2 9.8 24.7 10.1 23.2z"/></clipPath></defs><path d="M0.9 39.0C1.5 36.3 3.2 26.7 4.4 22.7C5.6 18.7 6.3 17.0 7.8 14.8C9.4 12.6 11.3 10.8 13.8 9.4C16.3 8.0 20.4 7.6 22.7 6.4C25.0 5.2 24.9 3.4 27.6 2.4C30.4 1.4 35.3 0.3 39.0 0.2C42.7 0.1 46.0 1.3 49.9 1.9C53.8 2.5 59.4 2.7 62.3 3.9C65.2 5.1 66.0 6.9 67.3 8.9C68.6 10.9 69.4 13.2 70.2 15.8C71.0 18.4 71.5 21.9 72.2 24.7C72.9 27.5 73.4 30.2 74.2 32.6C75.0 35.0 76.7 37.9 77.2 39.0z" fill="url(#rock)"/><path d="M0.9 39.0C1.5 36.3 3.2 26.7 4.4 22.7C5.6 18.7 6.3 17.0 7.8 14.8C9.4 12.6 11.3 10.8 13.8 9.4C16.3 8.0 20.4 7.6 22.7 6.4C25.0 5.2 24.9 3.4 27.6 2.4C30.4 1.4 35.3 0.3 39.0 0.2C42.7 0.1 46.0 1.3 49.9 1.9C53.8 2.5 59.4 2.7 62.3 3.9C65.2 5.1 66.0 6.9 67.3 8.9C68.6 10.9 69.4 13.2 70.2 15.8C71.0 18.4 71.5 21.9 72.2 24.7C72.9 27.5 73.4 30.2 74.2 32.6C75.0 35.0 76.7 37.9 77.2 39.0z" fill="url(#rsh)"/><ellipse cx="36" cy="31.3" rx="27" ry="5.2" fill="url(#snd)"/><g clip-path="url(#hol)"><rect x="8" y="3" width="54" height="18.2" fill="url(#sky)"/><rect x="8" y="21" width="54" height="9" fill="url(#sea)"/><path d="M21.5 18.200q1-2.300 3.600-1.700 2.200-2.900 5.300-.8 2.600-.2 3.200 2.500z" fill="#f6fcfb"/><path d="M35.800 12.600q1-1.700 3-1 2.200-2.500 4.500-.3 2.800-.5 3.600 1.300z" fill="#f6fcfb"/><path d="M32 24.500q6-1.500 16.500-1.300v1q-9-.3-16.500 .300z" fill="#fff" opacity=".9"/><path d="M42 22.800q3.500-3.600 8.800-3.700 1 .5.200 1.900-1.700 2.100-4.600 2.300z" fill="#f08a2c"/></g></svg>
  <!-- task view -->
  <svg class="a" style="left:351px;top:11px" width="18" height="17" viewBox="0 0 18 17"><g fill="none" stroke="#fff" stroke-width="1.300"><path d="M.600 1h10.800M.600 15.700h10.800"/><rect x="1.200" y="4.300" width="9.600" height="8"/><path d="M14.600 5v7.300"/></g><rect x="13.900" y="1.600" width="1.500" height="1.700" fill="#fff"/><rect x="13.900" y="13.600" width="1.500" height="1.700" fill="#fff"/></svg>
  <!-- pinned / running apps -->
  <svg class="a" style="left:399px;top:10px" width="23" height="19" viewBox="0 0 23 19"><path d="M0 2.500Q0 1.500 1 1.500H8.500L10.500 3.500H22Q23 3.500 23 4.500V17.500H0z" fill="#f3b233"/><path d="M0 5.500H23V18Q23 19 22 19H1Q0 19 0 18z" fill="#ffd95e"/><path d="M5 19v-6.500Q5 11.500 6 11.500H17Q18 11.500 18 12.500V19h-3.600v-3.200H8.600V19z" fill="#3d97e6"/><path d="M5 12.500Q5 11.500 6 11.500H17Q18 11.500 18 12.500V14H5z" fill="#2a7fd0"/></svg>
  <svg class="a" style="left:447px;top:8px" width="25" height="25" viewBox="0 0 25 25"><defs><linearGradient id="eg1" x1="0" y1="0" x2="1" y2="0"><stop offset="0" stop-color="#2b9be8"/><stop offset=".6" stop-color="#32c4b8"/><stop offset="1" stop-color="#7ad84a"/></linearGradient><linearGradient id="eg2" x1="0" y1="0" x2="0" y2="1"><stop offset="0" stop-color="#1a86dc"/><stop offset="1" stop-color="#0d55a8"/></linearGradient></defs><circle cx="12.500" cy="12.500" r="12" fill="url(#eg2)"/><path d="M.800 10.500A12 12 0 0 1 24.500 12Q24.500 17.500 19.500 17.500 15 17.500 15.500 14 16 12 14 10.300 11 8.300 7 10 3 12 2.300 17.500 .300 14.500 .800 10.500z" fill="url(#eg1)"/><path d="M9.300 12.300Q5.500 14.500 7.500 19.500 10 24 16.500 23.800 21 23 23 19.300 18 22 13.500 19 9.500 16 11.800 12.800z" fill="#0e4f9c"/><path d="M10.800 11.800Q13 10.500 14.600 12.200 15.500 13.500 15 15.200 13.500 12.200 10.800 11.800z" fill="#f2f8fd"/></svg>
  <svg class="a" style="left:497px;top:8px" width="26" height="26" viewBox="0 0 26 26"><circle cx="12" cy="11.700" r="11.800" fill="#5865f2"/><path d="M6.800 7.600Q9 6.300 10.300 6.300L10.800 7.300Q12 7.100 13.200 7.300L13.700 6.300Q15.500 6.500 17.200 7.600 19.300 11 19 15.200 17.300 16.600 15.500 17L14.700 15.600 15.800 15Q12 16.600 8.200 15L9.300 15.600 8.500 17Q6.500 16.500 5 15.200 4.600 11 6.800 7.600z" fill="#fff"/><ellipse cx="9.600" cy="11.900" rx="1.500" ry="1.700" fill="#5865f2"/><ellipse cx="14.400" cy="11.900" rx="1.500" ry="1.700" fill="#5865f2"/><circle cx="18" cy="18" r="7" fill="#ed3f45"/><circle cx="18" cy="18" r="3.100" fill="#fff"/></svg>
  <div class="a" style="left:547px;top:9px;width:22px;height:21px;box-sizing:border-box;border:1.500px solid #8cb6f5;background:#0b0a5a"></div>
  <span class="ui" style="left:551.500px;top:12px;font-size:13.500px;line-height:14px;font-weight:bold;color:#8cb6f5;letter-spacing:-.4px">Ps</span>
  <svg class="a" style="left:595px;top:8px" width="24" height="24" viewBox="0 0 24 24"><defs><linearGradient id="npg" x1="0" y1="0" x2="0" y2="1"><stop offset="0" stop-color="#eef6d8"/><stop offset=".45" stop-color="#a6dc52"/><stop offset="1" stop-color="#5cc01e"/></linearGradient></defs><path d="M.5.500H15L19.500 5V23.500H.5z" fill="#f2f2ee" stroke="#b9b9b2"/><rect x="1.500" y="7" width="17" height="15.500" fill="url(#npg)"/><path d="M1 2.500h13M1 4.500h14" stroke="#cfcfc8" stroke-width=".8"/><path d="M5 8v8M4 8.300h2M4 15.700h2M8 12h1.500M11 12h1.500" stroke="#4a4a4a" stroke-width="1.100"/><path d="M20.800 1.600l1.900 1.600L14.600 16.800 11.700 18.500 12.500 15.200z" fill="#f2a23a" stroke="#a8661a" stroke-width=".6"/><path d="M21.100 1.200l1.900 1.600.8-1.300-1.900-1.500z" fill="#e25d6a"/><path d="M11.700 18.500l.5-1.900 1.200 1z" fill="#333"/></svg>
  <div class="a" style="left:632px;top:0;width:48px;height:40px;background:#3d4945"></div>
  <svg class="a" style="left:645px;top:10px" width="22" height="21" viewBox="0 0 22 21"><defs><linearGradient id="a3" x1="0" y1="0" x2="0" y2="1"><stop offset="0" stop-color="#6e2a08"/><stop offset=".5" stop-color="#c45f17"/><stop offset="1" stop-color="#5e2206"/></linearGradient></defs><g fill="url(#a3)"><path d="M0 0h7v1.600H5.800V19.400H7V21H0V19.400h1.200V1.600H0z"/><path d="M7.500 0h7v1.600H13.300V19.400h1.200V21h-7V19.400h1.200V1.600H7.500z"/><path d="M15 0h7v1.600H20.800V19.400H22V21H15V19.400h1.200V1.600H15z"/></g></svg>
  <div class="ul" style="left:391px;width:31px"></div><div class="ul" style="left:423px;width:8px;background:#5b8cb5"></div>
  <div class="ul" style="left:440px;width:40px"></div><div class="ul" style="left:489px;width:40px"></div><div class="ul" style="left:538px;width:40px"></div><div class="ul" style="left:587px;width:40px"></div><div class="ul" style="left:632px;width:48px"></div>
  <!-- weather widget -->
  <svg class="a" style="left:1505px;top:8px" width="27" height="21" viewBox="0 0 27 21"><defs><linearGradient id="wc" x1="0" y1="0" x2="0" y2="1"><stop offset="0" stop-color="#e9f0fe"/><stop offset="1" stop-color="#a9c0ee"/></linearGradient></defs><path d="M6 20.500a5.300 5.300 0 0 1-.8-10.500A7.300 7.300 0 0 1 19 8.500a6 6 0 0 1 .5 12z" fill="url(#wc)"/><circle cx="19" cy="6" r="5.600" fill="#d92a2a"/></svg>
  <span class="ui" style="left:1522.300px;top:9.500px;font-size:9px;line-height:9px;color:#fff">1</span>
  <span class="ui" style="left:1538.200px;letter-spacing:-0.86px;top:13.800px;font-size:13.300px;line-height:13.300px">6°C</span>
  <span class="ui" style="left:1568.400px;letter-spacing:0.59px;top:13.800px;font-size:13.300px;line-height:13.300px">Nublado</span>
  <!-- tray icons -->
  <svg class="a" style="left:1646px;top:16px" width="14" height="8" viewBox="0 0 14 8"><path d="M.8 7.300L7 1.100l6.200 6.200" fill="none" stroke="#fff" stroke-width="1.300"/></svg>
  <svg class="a" style="left:1671px;top:12px" width="13" height="16" viewBox="0 0 13 16"><g fill="none" stroke="#fff" stroke-width="1.100"><rect x=".600" y="4.500" width="7.600" height="7" rx="1.200"/><path d="M8.200 7l3.800-2v6l-3.800-2z"/><path d="M2 2.500Q6 -.3 10.500 2.500M2 13.500Q6 16.300 10.500 13.500"/></g></svg>
  <svg class="a" style="left:1692px;top:14px" width="18" height="15" viewBox="0 0 18 15"><path d="M4 10.500a3.300 3.300 0 0 1-.4-6.500A4.500 4.500 0 0 1 12 3.500a3.500 3.500 0 0 1 .7 7z" fill="#d8d8d8"/><path d="M3.600 4A4.500 4.500 0 0 1 12 3.500 5.500 5.500 0 0 0 7 6 4 4 0 0 0 3.600 4z" fill="#9a9a9a"/><circle cx="12.600" cy="9.600" r="4.700" fill="#2f9cf0"/><path d="M12.600 9v3.300" stroke="#fff" stroke-width="1.500"/><circle cx="12.600" cy="7.100" r=".9" fill="#fff"/></svg>
  <svg class="a" style="left:1717px;top:13px" width="17" height="14" viewBox="0 0 17 14"><g fill="none" stroke="#fff" stroke-width="1.100"><path d="M3.600 3V.600H16.400V9.600H3.600V7"/><path d="M10 9.600v3M6.500 13.200h7"/><rect x=".600" y="2.500" width="4.600" height="5"/><path d="M1.500 4h2.800M1.500 5.700h2.800"/></g></svg>
  <svg class="a" style="left:1740px;top:13px" width="18" height="14" viewBox="0 0 18 14"><g fill="none" stroke="#fff" stroke-width="1.100"><path d="M.600 4.700H3.500L7 1.200V12.800L3.500 9.300H.600z"/><path d="M9.300 4.600Q10.700 7 9.300 9.400M11.600 2.800Q14 7 11.600 11.200M14 1Q17.500 7 14 13"/></g></svg>
  <span class="ui" style="left:1768.800px;top:13.800px;font-size:12px;line-height:12px;transform:scaleX(.79);transform-origin:0 0">ESP</span>
  <span class="ui" style="left:1818.600px;letter-spacing:-0.69px;top:5px;font-size:12px;line-height:12px">11:34</span>
  <span class="ui" style="left:1802.900px;letter-spacing:-0.35px;top:22.800px;font-size:12px;line-height:12px">04-07-2025</span>
  <svg class="a" style="left:1879px;top:12px" width="17" height="17" viewBox="0 0 17 17"><path d="M.600 .600H16.400V12.400H11L8.500 15.300 6 12.400H.600z" fill="none" stroke="#fff" stroke-width="1.200"/></svg>
  <div class="a" style="left:1916px;top:0;width:1px;height:40px;background:#7d8583"></div>
</div>
<!-- ===== "Abrir" file-open dialog ===== -->
<div id="dialog" class="a"><div class="a pg">
  <div class="a" style="left:409px;top:157px"><svg width="16" height="14" viewBox="0 0 16 14"><defs><linearGradient id="ap1" x1="0" y1="0" x2="0" y2="1"><stop offset="0" stop-color="#9c5206"/><stop offset=".28" stop-color="#b96400"/><stop offset=".8" stop-color="#862c00"/><stop offset="1" stop-color="#b04a1c"/></linearGradient></defs><rect x=".6" y=".1" width="14.800" height=".7" fill="#9c6a55" opacity=".7"/><rect x=".4" y="13" width="15.200" height="1" fill="#96452c" opacity=".9"/><g fill="url(#ap1)"><path d="M1.600.800h3.400L4.700 2v10.200l.4 1H1.500l.4-1V2z"/><path d="M6.400.800h3.400L9.500 2v10.200l.4 1H6.300l.4-1V2z"/><path d="M11.100.800h3.400L14.200 2v10.200l.4 1h-3.600l.4-1V2z"/></g></svg></div>
  <span class="ui" style="left:430px;letter-spacing:0.29px;top:159px">Abrir</span>
  <svg class="a" style="left:1670px;top:159px" width="10" height="10" viewBox="0 0 10 10"><path d="M.3.300l9.400 9.400M9.700.300L.3 9.700" stroke="#000" stroke-width="1.100" fill="none"/></svg>
  <!-- nav row -->
  <svg class="a" style="left:413px;top:191px" width="14" height="12" viewBox="0 0 14 12"><path d="M13.500 6H1.500M6.300 1L1.300 6l5 5" fill="none" stroke="#5b5b5b" stroke-width="1.700"/></svg>
  <svg class="a" style="left:443px;top:191px" width="14" height="12" viewBox="0 0 14 12"><path d="M.5 6h12M7.700 1l5 5-5 5" fill="none" stroke="#cfcfcf" stroke-width="1.500"/></svg>
  <svg class="a" style="left:470px;top:194px" width="7" height="5" viewBox="0 0 7 5"><path d="M.6.600L3.500 3.600 6.400.600" fill="none" stroke="#777" stroke-width="1.300"/></svg>
  <svg class="a" style="left:488px;top:190px" width="12" height="14" viewBox="0 0 12 14"><path d="M6 13.500V1.500M1 6.300L6 1.300l5 5" fill="none" stroke="#5b5b5b" stroke-width="1.700"/></svg>
  <div class="a" style="left:507px;top:186px;width:957px;height:22px;box-sizing:border-box;border:1px solid #d9d9d9;background:#fff"></div>
  <div class="a" style="left:1443px;top:187px;width:1px;height:20px;background:#e5e5e5"></div>
  <div class="a" style="left:512px;top:188px"><svg width="13" height="16" viewBox="0 0 13 16"><path d="M.5 1.2Q.5.5 1.2.5H10.3Q11 .5 11 1.2V15.5H.5z" fill="#ffe38c" stroke="#e9c25c" stroke-width=".9"/><path d="M11 9.2h1.5v6.3H9.7v-5q0-1.3 1.3-1.3z" fill="#ffd768" stroke="#e3b84a" stroke-width=".8"/></svg></div>
  <div class="a" style="left:533px;top:193px"><svg width="5" height="8" viewBox="0 0 5 8"><path d="M.8.800L4 4 .8 7.200" fill="none" stroke="#6e6e6e" stroke-width="1.300"/></svg></div>
  <span class="ui" style="left:547px;letter-spacing:-0.29px;top:191px">Este equipo</span>
  <div class="a" style="left:617px;top:193px"><svg width="5" height="8" viewBox="0 0 5 8"><path d="M.8.800L4 4 .8 7.200" fill="none" stroke="#6e6e6e" stroke-width="1.300"/></svg></div>
  <span class="ui" style="left:631px;letter-spacing:-0.16px;top:191px">Disco local (C:)</span>
  <div class="a" style="left:719px;top:193px"><svg width="5" height="8" viewBox="0 0 5 8"><path d="M.8.800L4 4 .8 7.200" fill="none" stroke="#6e6e6e" stroke-width="1.300"/></svg></div>
  <span class="ui" style="left:733px;letter-spacing:-0.12px;top:191px">Archivos de programa (x86)</span>
  <div class="a" style="left:890px;top:193px"><svg width="5" height="8" viewBox="0 0 5 8"><path d="M.8.800L4 4 .8 7.200" fill="none" stroke="#6e6e6e" stroke-width="1.300"/></svg></div>
  <span class="ui" style="left:902px;letter-spacing:-0.55px;top:191px">Steam</span>
  <div class="a" style="left:945px;top:193px"><svg width="5" height="8" viewBox="0 0 5 8"><path d="M.8.800L4 4 .8 7.200" fill="none" stroke="#6e6e6e" stroke-width="1.300"/></svg></div>
  <span class="ui" style="left:958px;letter-spacing:-0.21px;top:191px">steamapps</span>
  <div class="a" style="left:1025px;top:193px"><svg width="5" height="8" viewBox="0 0 5 8"><path d="M.8.800L4 4 .8 7.200" fill="none" stroke="#6e6e6e" stroke-width="1.300"/></svg></div>
  <span class="ui" style="left:1038px;letter-spacing:0.50px;top:191px">common</span>
  <div class="a" style="left:1097px;top:193px"><svg width="5" height="8" viewBox="0 0 5 8"><path d="M.8.800L4 4 .8 7.200" fill="none" stroke="#6e6e6e" stroke-width="1.300"/></svg></div>
  <span class="ui" style="left:1110px;letter-spacing:-1.01px;top:191px">AoE3DE</span>
  <div class="a" style="left:1161px;top:193px"><svg width="5" height="8" viewBox="0 0 5 8"><path d="M.8.800L4 4 .8 7.200" fill="none" stroke="#6e6e6e" stroke-width="1.300"/></svg></div>
  <span class="ui" style="left:1174px;letter-spacing:-0.56px;top:191px">Game</span>
  <div class="a" style="left:1215px;top:193px"><svg width="5" height="8" viewBox="0 0 5 8"><path d="M.8.800L4 4 .8 7.200" fill="none" stroke="#6e6e6e" stroke-width="1.300"/></svg></div>
  <span class="ui" style="left:1228px;letter-spacing:-0.45px;top:191px">Data</span>
  <svg class="a" style="left:1428px;top:193px" width="10" height="7" viewBox="0 0 10 7"><path d="M.8.800L5 5.200 9.200.800" fill="none" stroke="#666" stroke-width="1.500"/></svg>
  <svg class="a" style="left:1448px;top:190px" width="12" height="13" viewBox="0 0 12 13"><path d="M3.300 3.200A4.700 4.700 0 1 0 8.400 2.900" fill="none" stroke="#666" stroke-width="1.300"/><path d="M6 .3v3.600H2.600" fill="none" stroke="#666" stroke-width="1.200"/></svg>
  <div class="a" style="left:1476px;top:186px;width:202px;height:22px;box-sizing:border-box;border:1px solid #d9d9d9;background:#fff"></div>
  <span class="ui" style="left:1485px;letter-spacing:-0.40px;top:191px;color:#6d6d6d">Buscar en Data</span>
  <svg class="a" style="left:1657px;top:191px" width="13" height="13" viewBox="0 0 13 13"><circle cx="8.300" cy="4.500" r="3.500" fill="none" stroke="#6a6a6a" stroke-width="1.300"/><path d="M5.800 7L.8 12" stroke="#6a6a6a" stroke-width="1.600"/></svg>
  <!-- command bar -->
  <div class="a" style="left:401px;top:215px;width:1289px;height:30px;background:#f5f6f7;border-bottom:1px solid #e9eaeb"></div>
  <span class="ui" style="left:419.500px;letter-spacing:-0.27px;top:224px;color:#1e3c78">Organizar</span>
  <svg class="a" style="left:476px;top:227px" width="8" height="5" viewBox="0 0 8 5"><path d="M0 0h7.600L3.800 4.200z" fill="#1e3c78"/></svg>
  <span class="ui" style="left:514.300px;letter-spacing:-0.20px;top:224px;color:#1e3c78">Nueva carpeta</span>
  <svg class="a" style="left:1568px;top:222px" width="17" height="15" viewBox="0 0 17 15"><g fill="none" stroke="#8a8a8a" stroke-width=".8"><rect x=".4" y=".4" width="3.700" height="3.700"/><rect x=".4" y="5.400" width="3.700" height="3.700"/><rect x=".4" y="10.400" width="3.700" height="3.700"/></g><circle cx="2.250" cy="2.250" r=".7" fill="#4a90d9"/><circle cx="2.250" cy="7.250" r=".7" fill="#4a90d9"/><circle cx="2.250" cy="12.250" r=".7" fill="#d04545"/><path d="M6 2.300h4M12 2.300h4M6 7.300h4M12 7.300h4M6 12.300h4M12 12.300h4" stroke="#6b6b6b" stroke-width="1.200"/></svg>
  <svg class="a" style="left:1593px;top:227px" width="9" height="5" viewBox="0 0 9 5"><path d="M0 0h8.600L4.300 4.700z" fill="#1c2e5a"/></svg>
  <svg class="a" style="left:1623px;top:223px" width="17" height="13" viewBox="0 0 17 13"><rect x=".5" y=".5" width="16" height="12" fill="#fff" stroke="#8a8a8a"/><rect x="1" y="1" width="15" height="1.300" fill="#b8b8b8"/><path d="M5.500 1v11.500" stroke="#8a8a8a"/><rect x="9.500" y="2" width="6" height="10" fill="#4f9be6"/></svg>
  <svg class="a" style="left:1659px;top:222px" width="17" height="17" viewBox="0 0 17 17"><circle cx="8.300" cy="8.300" r="8" fill="#0c5fc4" stroke="#0a49a0" stroke-width=".6"/><path d="M5.800 6.300Q5.900 3.700 8.400 3.700 10.900 3.700 10.900 5.900 10.900 7.200 9.500 8 8.400 8.700 8.400 10" fill="none" stroke="#fff" stroke-width="1.900"/><circle cx="8.400" cy="12.700" r="1.150" fill="#fff"/></svg>
  <!-- navigation pane -->
  <div class="a" style="left:427px;top:268px"><svg width="15" height="13" viewBox="0 0 15 13"><path d="M9.3.3l1.5 4 4 .2-3.2 2.6 1.1 4.1-3.4-2.3-3.5 2.3 1.1-4.1L3.7 4.5l4.1-.2z" fill="#2f9cf0" stroke="#1b7fd4" stroke-width=".5"/><path d="M.5 5.2l3.4-1M.2 8.3l4.3-2M1.6 11.4l3.6-2.6" stroke="#4ba6ee" stroke-width="1" fill="none"/></svg></div>
  <span class="ui" style="left:446.300px;letter-spacing:-0.17px;top:268px">Acceso rápido</span>
  <div class="a" style="left:433px;top:292px"><svg width="16" height="12" viewBox="0 0 16 12"><defs><linearGradient id="dk" x1="0" y1="0" x2="1" y2="1"><stop offset="0" stop-color="#1689ee"/><stop offset=".5" stop-color="#34a3ff"/><stop offset="1" stop-color="#1c8df0"/></linearGradient></defs><rect width="16" height="12" fill="url(#dk)"/><rect y="9.8" width="16" height="2.2" fill="#1574d6"/><rect x="1" y="10.4" width="10" height="1" fill="#fff"/><rect x="12.4" y="10.4" width="1" height="1" fill="#fff"/><rect x="14" y="10.4" width="1" height="1" fill="#fff"/></svg></div>
  <span class="ui" style="left:454.300px;letter-spacing:-0.17px;top:292px">Escritorio</span>
  <div class="a" style="left:526px;top:293px"><svg width="11" height="11" viewBox="0 0 11 11"><path d="M6.2.6l4.2 4.2-1.2.4-1.6 1.6.1 2.2-1 .9L2.1 5.300l.9-1 2.200.1L6.800 2.800z" fill="#8e8e8e"/><path d="M3.900 7.100L.6 10.400" stroke="#8e8e8e" stroke-width="1.200"/></svg></div>
  <div class="a" style="left:433px;top:314px"><svg width="16" height="16" viewBox="0 0 16 16"><path d="M5.4 0h5.2v7.6H16L8 15.6 0 7.6h5.4z" fill="#3b8fe2"/><path d="M5.4 0h5.2v1H5.4z" fill="#5aa6ee"/></svg></div>
  <span class="ui" style="left:454.300px;letter-spacing:-0.58px;top:316px">Descargas</span>
  <div class="a" style="left:526px;top:317px"><svg width="11" height="11" viewBox="0 0 11 11"><path d="M6.2.6l4.2 4.2-1.2.4-1.6 1.6.1 2.2-1 .9L2.1 5.300l.9-1 2.200.1L6.800 2.800z" fill="#8e8e8e"/><path d="M3.900 7.100L.6 10.400" stroke="#8e8e8e" stroke-width="1.200"/></svg></div>
  <div class="a" style="left:435px;top:338px"><svg width="12" height="16" viewBox="0 0 12 16"><path d="M.5.5h8l3 3v12H.5z" fill="#fff" stroke="#8f8f8f"/><path d="M8.5.5v3h3" fill="#f2f2f2" stroke="#8f8f8f" stroke-width=".8"/><path d="M2.5 4.5h2M2 6.5h8M2 8.5h3.5M2 10.5h3.5M2 12.5h8" stroke="#3f8fe0" stroke-width="1"/><rect x="6.5" y="8" width="3.5" height="3" fill="#5b8f5b"/></svg></div>
  <span class="ui" style="left:454.300px;letter-spacing:0.01px;top:340px">Documentos</span>
  <div class="a" style="left:526px;top:341px"><svg width="11" height="11" viewBox="0 0 11 11"><path d="M6.2.6l4.2 4.2-1.2.4-1.6 1.6.1 2.2-1 .9L2.1 5.300l.9-1 2.200.1L6.800 2.800z" fill="#8e8e8e"/><path d="M3.900 7.100L.6 10.400" stroke="#8e8e8e" stroke-width="1.200"/></svg></div>
  <div class="a" style="left:433px;top:364px"><svg width="16" height="12" viewBox="0 0 16 12"><rect x=".5" y=".5" width="15" height="11" fill="#fff" stroke="#9a9a9a"/><rect x="2" y="2" width="12" height="8" fill="#7fb6e8"/><path d="M2 6.2Q6 4 14 7v3H2z" fill="#3f6b4a"/><path d="M2 8.2Q8 7 14 9v1H2z" fill="#cfe0d0"/></svg></div>
  <span class="ui" style="left:454.300px;letter-spacing:-0.31px;top:364px">Imágenes</span>
  <div class="a" style="left:526px;top:365px"><svg width="11" height="11" viewBox="0 0 11 11"><path d="M6.2.6l4.2 4.2-1.2.4-1.6 1.6.1 2.2-1 .9L2.1 5.300l.9-1 2.200.1L6.800 2.800z" fill="#8e8e8e"/><path d="M3.900 7.100L.6 10.400" stroke="#8e8e8e" stroke-width="1.200"/></svg></div>
  <div class="a" style="left:435px;top:386px"><svg width="13" height="16" viewBox="0 0 13 16"><path d="M.5 1.2Q.5.5 1.2.5H10.3Q11 .5 11 1.2V15.5H.5z" fill="#ffe38c" stroke="#e9c25c" stroke-width=".9"/><path d="M11 9.2h1.5v6.3H9.7v-5q0-1.3 1.3-1.3z" fill="#ffd768" stroke="#e3b84a" stroke-width=".8"/></svg></div>
  <span class="ui" style="left:454.300px;letter-spacing:-0.46px;top:388px">decks</span>
  <div class="a" style="left:435px;top:410px"><svg width="13" height="16" viewBox="0 0 13 16"><path d="M.5 1.2Q.5.5 1.2.5H10.3Q11 .5 11 1.2V15.5H.5z" fill="#ffe38c" stroke="#e9c25c" stroke-width=".9"/><path d="M11 9.2h1.5v6.3H9.7v-5q0-1.3 1.3-1.3z" fill="#ffd768" stroke="#e3b84a" stroke-width=".8"/></svg></div>
  <span class="ui" style="left:454.300px;letter-spacing:-0.07px;top:412px">Lunfardia</span>
  <div class="a" style="left:435px;top:434px"><svg width="13" height="16" viewBox="0 0 13 16"><path d="M.5 1.2Q.5.5 1.2.5H10.3Q11 .5 11 1.2V15.5H.5z" fill="#ffe38c" stroke="#e9c25c" stroke-width=".9"/><path d="M11 9.2h1.5v6.3H9.7v-5q0-1.3 1.3-1.3z" fill="#ffd768" stroke="#e3b84a" stroke-width=".8"/></svg></div>
  <div class="a" style="left:454px;top:434px;width:86px;height:16px;overflow:hidden"><span class="ui" style="left:0.300px;letter-spacing:0.01px;top:2px">Mounted Granaderos</span></div>
  <div class="a" style="left:435px;top:458px"><svg width="13" height="16" viewBox="0 0 13 16"><path d="M.5 1.2Q.5.5 1.2.5H10.3Q11 .5 11 1.2V15.5H.5z" fill="#ffe38c" stroke="#e9c25c" stroke-width=".9"/><path d="M11 9.2h1.5v6.3H9.7v-5q0-1.3 1.3-1.3z" fill="#ffd768" stroke="#e3b84a" stroke-width=".8"/></svg></div>
  <span class="ui" style="left:454.300px;letter-spacing:-0.42px;top:460px">Screenshots</span>
  <div class="a" style="left:425px;top:492px"><svg width="16" height="11" viewBox="0 0 16 11"><path d="M4 10.500a3.300 3.300 0 0 1-.6-6.500A4.600 4.600 0 0 1 12 3.300a3.700 3.700 0 0 1 .6 7.200z" fill="#1d86e0"/><path d="M3.400 4A4.600 4.600 0 0 1 12 3.300 5 5 0 0 0 6.500 5.600 3.500 3.500 0 0 0 3.400 4z" fill="#0f5fc0"/></svg></div>
  <div class="a" style="left:446px;top:490px;width:94px;height:16px;overflow:hidden"><span class="ui" style="left:0.300px;letter-spacing:-0.01px;top:2px">OneDrive - Personal</span></div>
  <div class="a" style="left:402px;top:518px;width:138px;height:24px;background:#d9d9d9"></div>
  <div class="a" style="left:425px;top:523px"><svg width="16" height="15" viewBox="0 0 16 15"><rect x=".5" y=".5" width="15" height="10" fill="#35b1f2" stroke="#6f8ea6"/><path d="M1 1h14v4L1 9z" fill="#5cc6f8"/><path d="M5 12.500h6M2.500 14.300h11" stroke="#8aa0b4" stroke-width="1"/></svg></div>
  <span class="ui" style="left:446.300px;letter-spacing:-0.29px;top:524px">Este equipo</span>
  <!-- nav scrollbar -->
  <div class="a" style="left:541px;top:246px;width:15px;height:299px;background:#f0f0f0"></div>
  <div class="a" style="left:541px;top:263px;width:15px;height:239px;background:#c2c2c2"></div>
  <svg class="a" style="left:544px;top:252px" width="9" height="6" viewBox="0 0 9 6"><path d="M1 5L4.500 1.500 8 5" fill="none" stroke="#404040" stroke-width="1.700"/></svg>
  <svg class="a" style="left:544px;top:533px" width="9" height="6" viewBox="0 0 9 6"><path d="M1 1L4.500 4.500 8 1" fill="none" stroke="#404040" stroke-width="1.700"/></svg>
  <!-- file list header -->
  <span class="ui" style="left:578.300px;letter-spacing:0.26px;top:253px;color:#4c607a">Nombre</span>
  <svg class="a" style="left:698px;top:246px" width="9" height="5" viewBox="0 0 9 5"><path d="M.7 4.500L4.500.800 8.300 4.500" fill="none" stroke="#6b6b6b" stroke-width="1"/></svg>
  <div class="vs" style="left:832px"></div>
  <span class="ui" style="left:839.300px;letter-spacing:-0.03px;top:253px;color:#4c607a">Fecha de modificación</span>
  <div class="vs" style="left:976px"></div>
  <span class="ui" style="left:983.300px;letter-spacing:-0.17px;top:253px;color:#4c607a">Tipo</span>
  <div class="vs" style="left:1096px"></div>
  <span class="ui" style="left:1103.300px;letter-spacing:-0.20px;top:253px;color:#4c607a">Tamaño</span>
  <div class="vs" style="left:1176px"></div>
  <!-- files -->
  <div class="a" style="left:575px;top:277px;width:598px;height:22px;box-sizing:border-box;border:1px solid #99d1ff;background:#cce8ff"></div>
  <div class="a" style="left:581px;top:279px"><svg width="13" height="17" viewBox="0 0 13 17"><path d="M.5.5h8.300l3.700 3.700v12.300H.5z" fill="#fff" stroke="#8e8e8e"/><path d="M8.800.5v3.700h3.700" fill="#f4f4f4" stroke="#8e8e8e" stroke-width=".9"/></svg></div>
  <span class="ui" style="left:599.300px;letter-spacing:-0.33px;top:282px">Data.bar</span>
  <span class="ui" style="left:839.300px;letter-spacing:-0.43px;top:282px;color:#6d6d6d">27-11-2024 10:42</span>
  <span class="ui" style="left:983.300px;letter-spacing:-0.23px;top:282px;color:#6d6d6d">Archivo BAR</span>
  <span class="ui" style="left:1113.300px;letter-spacing:-0.81px;top:282px;color:#6d6d6d">310.915 KB</span>
  <div class="a" style="left:581px;top:300px"><svg width="13" height="17" viewBox="0 0 13 17"><path d="M.5.5h8.300l3.700 3.700v12.300H.5z" fill="#fff" stroke="#8e8e8e"/><path d="M8.800.5v3.700h3.700" fill="#f4f4f4" stroke="#8e8e8e" stroke-width=".9"/></svg></div>
  <span class="ui" style="left:599.300px;letter-spacing:-0.25px;top:303px">Fonts.bar</span>
  <span class="ui" style="left:839.300px;letter-spacing:-0.43px;top:303px;color:#6d6d6d">27-11-2024 10:42</span>
  <span class="ui" style="left:983.300px;letter-spacing:-0.23px;top:303px;color:#6d6d6d">Archivo BAR</span>
  <span class="ui" style="left:1119px;letter-spacing:-0.79px;top:303px;color:#6d6d6d">23.067 KB</span>
  <!-- footer -->
  <div class="a" style="left:402px;top:545px;width:1287px;height:75px;background:#f0f0f0"></div>
  <span class="ui" style="left:531.300px;letter-spacing:-0.01px;top:560px">Nombre de archivo:</span>
  <div class="a" style="left:641px;top:554px;width:832px;height:24px;box-sizing:border-box;border:1px solid #7a7a7a;background:#fff"></div>
  <span class="ui" style="left:645.500px;letter-spacing:-0.33px;top:561px">Data.bar</span>
  <svg class="a" style="left:1459px;top:564px" width="10" height="6" viewBox="0 0 10 6"><path d="M.7.700L5 5 9.300.700" fill="none" stroke="#404040" stroke-width="1.100"/></svg>
  <div class="a" style="left:1485px;top:554px;width:188px;height:23px;box-sizing:border-box;border:1px solid #adadad;background:#e1e1e1"></div>
  <div class="a" style="left:1488px;top:556px;width:165px;height:18px;overflow:hidden"><span class="ui" style="left:1.200px;letter-spacing:-0.20px;top:4px">Age of Empires 3 .BAR files (*.bar)</span></div>
  <svg class="a" style="left:1659px;top:563px" width="10" height="6" viewBox="0 0 10 6"><path d="M.7.700L5 5 9.300.700" fill="none" stroke="#404040" stroke-width="1.100"/></svg>
  <div class="a" style="left:1486px;top:584px;width:86px;height:24px;box-sizing:border-box;border:2px solid #0078d7;background:#e1e1e1"></div>
  <span class="ui" style="left:1516px;letter-spacing:0.16px;top:590px">Abrir</span>
  <div class="a" style="left:1586px;top:584px;width:86px;height:24px;box-sizing:border-box;border:1px solid #adadad;background:#e1e1e1"></div>
  <span class="ui" style="left:1606.600px;letter-spacing:-0.39px;top:590px">Cancelar</span>
  <svg class="a" style="left:1679px;top:609px" width="10" height="10" viewBox="0 0 10 10"><g fill="#b8b8b8"><rect x="7" y="1" width="2" height="2"/><rect x="4" y="4" width="2" height="2"/><rect x="7" y="4" width="2" height="2"/><rect x="1" y="7" width="2" height="2"/><rect x="4" y="7" width="2" height="2"/><rect x="7" y="7" width="2" height="2"/></g></svg>
</div></div>
<!-- ===== red hand-drawn annotation: arrow + "Hero" ===== -->
<svg class="a" style="left:0;top:0;pointer-events:none" width="1920" height="1080" viewBox="0 0 1920 1080"><path d="M1291.5 382.5C1292.3 378.4 1294.1 367.3 1296.2 358.0C1298.3 348.7 1301.8 336.5 1304.0 326.5C1306.2 316.5 1308.0 306.9 1309.7 298.0C1311.4 289.1 1312.6 280.8 1314.0 273.0C1315.4 265.2 1316.4 257.8 1318.0 251.0C1319.6 244.2 1322.6 235.6 1323.5 232.5 M1323.5 232.5C1328.7 232.7 1344.1 232.2 1354.5 233.6C1364.9 235.0 1375.5 238.3 1386.0 240.9C1396.5 243.5 1406.9 246.4 1417.4 249.4C1427.9 252.4 1438.5 255.1 1449.0 258.8C1459.5 262.5 1469.9 267.4 1480.4 271.4C1490.9 275.4 1501.4 279.3 1511.9 283.0C1522.4 286.7 1534.0 289.7 1543.4 293.4C1552.9 297.1 1564.4 303.2 1568.6 305.1 M1342.5 251.9C1344.5 256.2 1349.9 267.4 1354.5 277.7C1359.1 288.0 1365.5 302.6 1370.2 313.9C1374.9 325.2 1379.1 334.9 1382.8 345.4C1386.5 355.9 1389.0 367.5 1392.2 376.9C1395.4 386.3 1398.0 392.6 1401.7 402.0C1405.4 411.4 1410.4 423.5 1414.3 433.5C1418.2 443.5 1422.1 453.0 1425.3 461.9C1428.5 470.8 1431.1 479.1 1433.2 487.0C1435.3 494.9 1436.6 502.3 1437.9 509.1C1439.2 515.9 1440.5 524.9 1441.0 528.0 M1313.9 608.1C1313.9 612.2 1314.4 623.9 1313.9 632.6C1313.4 641.3 1312.3 650.7 1310.7 660.3C1309.1 669.9 1307.1 679.1 1304.3 690.1C1301.5 701.1 1297.4 714.6 1293.7 726.3C1290.0 738.0 1284.0 754.7 1282.0 760.4 M1369.3 619.8C1368.4 625.5 1366.1 642.9 1364.0 653.9C1361.9 664.9 1359.2 675.2 1356.5 685.9C1353.8 696.5 1350.8 707.1 1348.0 717.8C1345.2 728.4 1341.6 740.9 1339.5 749.8C1337.4 758.7 1335.9 767.5 1335.2 771.1 M1282.0 692.7C1287.3 692.6 1303.2 692.7 1313.9 692.3C1324.6 691.9 1337.2 690.3 1345.9 690.1C1354.6 689.9 1362.7 691.0 1366.0 691.2 M1368.2 728.5C1371.6 728.7 1381.9 730.2 1388.5 729.5C1395.1 728.8 1403.5 727.6 1407.6 724.2C1411.7 720.8 1413.7 714.1 1413.0 709.3C1412.3 704.5 1407.5 698.2 1403.4 695.5C1399.3 692.8 1393.3 692.4 1388.5 693.3C1383.7 694.2 1377.8 697.1 1374.6 700.8C1371.4 704.5 1370.0 710.0 1369.3 715.7C1368.6 721.4 1369.0 728.9 1370.4 734.9C1371.8 740.9 1375.3 747.1 1377.8 751.9C1380.3 756.7 1384.0 761.6 1385.3 763.6 M1451.3 706.1C1450.6 709.8 1448.9 720.9 1447.1 728.5C1445.3 736.1 1442.8 744.8 1440.7 751.9C1438.6 759.0 1435.9 766.1 1434.3 771.1C1432.7 776.1 1431.6 779.9 1431.1 781.7 M1437.5 741.3C1441.0 740.6 1452.4 738.4 1458.8 737.0C1465.2 735.6 1471.0 734.1 1475.8 733.2C1480.6 732.3 1485.5 732.0 1487.5 731.7 M1501.4 804.1C1501.6 800.4 1501.3 789.3 1502.5 781.7C1503.7 774.1 1505.1 765.4 1508.8 758.3C1512.5 751.2 1518.6 744.6 1524.8 739.1C1531.0 733.6 1539.7 728.5 1546.1 725.3C1552.5 722.1 1559.3 718.4 1563.2 720.0C1567.1 721.6 1568.2 728.5 1569.6 734.9C1571.0 741.3 1572.4 750.8 1571.7 758.3C1571.0 765.8 1568.2 774.5 1565.3 779.6C1562.4 784.8 1558.5 789.9 1554.6 789.2C1550.7 788.5 1546.5 780.4 1541.9 775.3C1537.3 770.1 1529.5 761.1 1527.0 758.3" fill="none" stroke="#ff001a" stroke-width="18" stroke-linecap="round" stroke-linejoin="round"/></svg>
</body>
</html>
